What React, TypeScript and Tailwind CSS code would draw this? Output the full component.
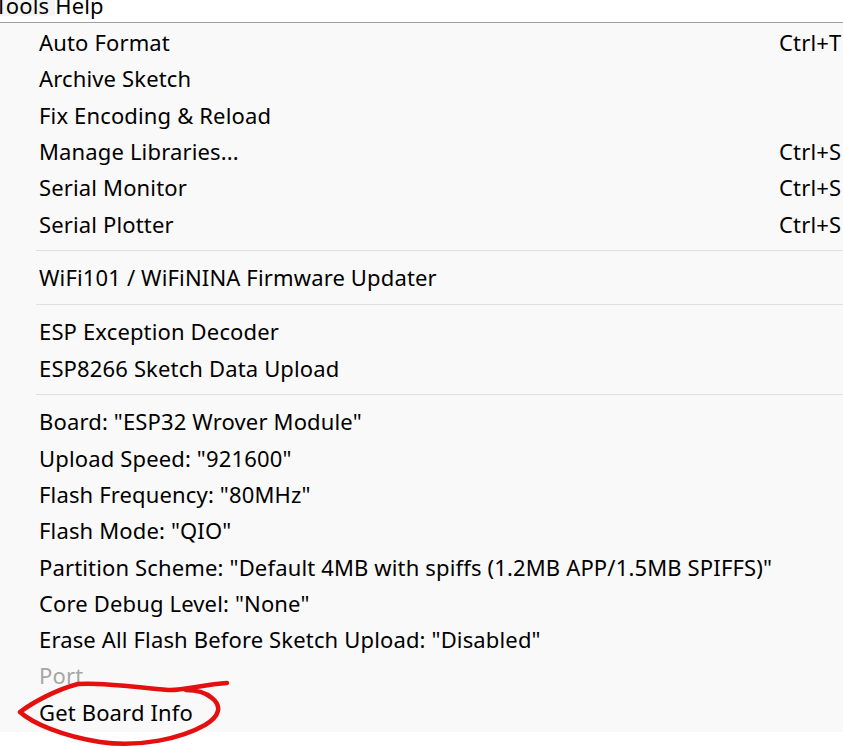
import React from "react";

type Item = { label: string; shortcut?: string; disabled?: boolean };

const groups: Item[][] = [
  [
    { label: "Auto Format", shortcut: "Ctrl+T" },
    { label: "Archive Sketch" },
    { label: "Fix Encoding & Reload" },
    { label: "Manage Libraries...", shortcut: "Ctrl+S" },
    { label: "Serial Monitor", shortcut: "Ctrl+S" },
    { label: "Serial Plotter", shortcut: "Ctrl+S" },
  ],
  [{ label: "WiFi101 / WiFiNINA Firmware Updater" }],
  [{ label: "ESP Exception Decoder" }, { label: "ESP8266 Sketch Data Upload" }],
  [
    { label: 'Board: "ESP32 Wrover Module"' },
    { label: 'Upload Speed: "921600"' },
    { label: 'Flash Frequency: "80MHz"' },
    { label: 'Flash Mode: "QIO"' },
    { label: 'Partition Scheme: "Default 4MB with spiffs (1.2MB APP/1.5MB SPIFFS)"' },
    { label: 'Core Debug Level: "None"' },
    { label: 'Erase All Flash Before Sketch Upload: "Disabled"' },
    { label: "Port", disabled: true },
    { label: "Get Board Info" },
  ],
];

function Row({ item }: { item: Item }) {
  return (
    <div className="relative flex h-[36.3px] items-center whitespace-nowrap pl-[39px]">
      <span className={item.disabled ? "text-[#a6a6a6]" : "text-black"}>{item.label}</span>
      {item.shortcut && <span className="absolute left-[779px] text-black">{item.shortcut}</span>}
    </div>
  );
}

export default function App() {
  return (
    <div
      className="relative h-[748px] w-[843px] overflow-hidden bg-white text-[22px] leading-none tracking-[0.15px]"
      style={{ fontFamily: '"Noto Sans", "Open Sans", sans-serif' }}
    >
      <div className="flex h-[23px] items-end whitespace-nowrap border-b border-[#a0a0a0] pb-[6px]">
        <span className="-ml-[5px] bg-[#f4f4f4] pr-[6px]">Tools</span>
        <span>Help</span>
      </div>

      <div className="flex h-[709px] flex-col bg-[#f9f9f9] pt-[1px]">
        {groups.map((group, gi) => (
          <div key={gi}>
            {gi > 0 && (
              <div className="flex h-[17.5px] items-center pl-[36px]">
                <div className="h-px w-full bg-[#e0e0e0]" />
              </div>
            )}
            {group.map((item) => (
              <Row key={item.label} item={item} />
            ))}
          </div>
        ))}
      </div>

      <svg className="pointer-events-none absolute left-0 top-0" width="843" height="748">
        <path
          d="M227,683 C205,684 182,691 168,690 C140,688 105,682 78,684 C55,690 32,703 20,712 C32,723 62,736 100,742 C140,748 182,738 205,725 C220,716 222,706 212,698 C205,692 196,690 186,690"
          fill="none"
          stroke="#e3100f"
          strokeWidth="4.5"
          strokeLinecap="round"
          strokeLinejoin="round"
        />
      </svg>
    </div>
  );
}
